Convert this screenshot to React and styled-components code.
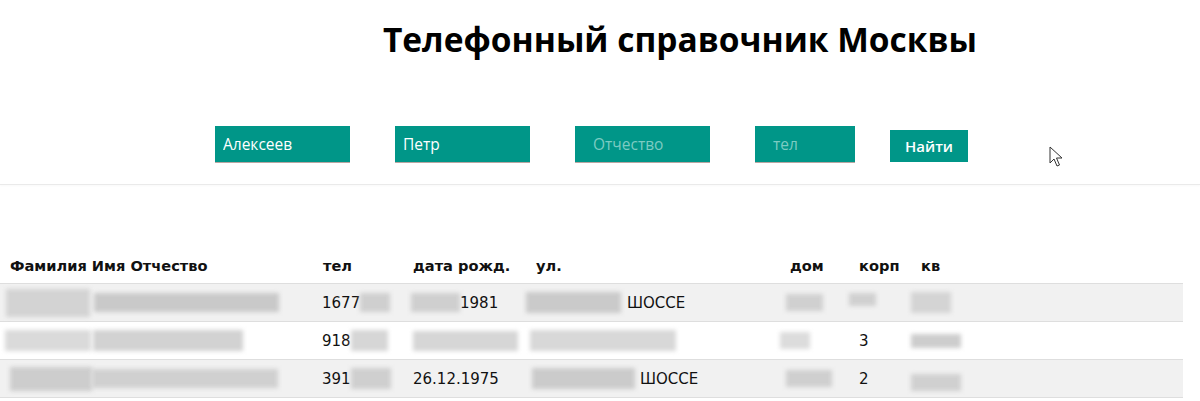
import styled, { createGlobalStyle } from 'styled-components';

const GlobalStyle = createGlobalStyle`
  html, body {
    margin: 0;
    padding: 0;
    background: #fff;
  }
  body {
    font-family: "DejaVu Sans", Verdana, sans-serif;
    color: #111;
  }
`;

const Page = styled.div`
  position: relative;
  width: 1200px;
  height: 401px;
  overflow: hidden;
`;

const Title = styled.h1`
  margin: 0;
  padding: 14px 0 0 160px;
  height: 50px;
  text-align: center;
  font-family: "Open Sans", "Noto Sans", sans-serif;
  font-size: 33.5px;
  font-weight: 700;
  line-height: 50px;
  color: #000;
`;

const SearchForm = styled.form`
  display: flex;
  align-items: center;
  padding: 62px 0 0 215px;
  height: 37px;
`;

const Field = styled.input`
  box-sizing: border-box;
  width: ${(p) => p.$width}px;
  height: 37px;
  margin-right: ${(p) => p.$gap}px;
  padding: 0 0 0 ${(p) => p.$indent}px;
  border: none;
  border-bottom: 1px solid #b9a5a2;
  background: #009688;
  color: #fff;
  font-family: "Open Sans", "Noto Sans", sans-serif;
  font-size: 15.5px;
  outline: none;
  &::placeholder {
    color: #7ccbc2;
  }
`;

const SubmitButton = styled.button`
  box-sizing: border-box;
  width: 78px;
  height: 32px;
  margin-top: 3px;
  border: none;
  background: #009688;
  color: #fff;
  font-family: "Open Sans", "Noto Sans", sans-serif;
  font-size: 15px;
  font-weight: 600;
  cursor: pointer;
`;

const Divider = styled.div`
  margin-top: 21px;
  height: 1px;
  background: #eaeaea;
  box-shadow: 0 1px 2px rgba(0, 0, 0, 0.04);
`;

const Table = styled.div`
  width: 1183px;
  margin-top: 62px;
`;

const Row = styled.div`
  display: grid;
  grid-template-columns: 313px 90px 123px 254px 69px 62px 1fr;
  height: ${(p) => (p.$head ? 37 : 38)}px;
  background: ${(p) => (p.$shaded ? '#f1f1f1' : '#fff')};
  border-bottom: 1px solid #dedede;
  box-sizing: border-box;
`;

const HeadCell = styled.div`
  display: flex;
  align-items: center;
  padding-left: 10px;
  font-size: 14.6px;
  font-weight: 700;
  color: #111;
`;

const Cell = styled.div`
  display: flex;
  align-items: center;
  padding-left: ${(p) => p.$pad ?? 9}px;
  font-size: 15px;
  color: #111;
  white-space: nowrap;
`;

const Blur = styled.span`
  display: inline-block;
  flex: none;
  width: ${(p) => p.$w}px;
  height: ${(p) => p.$h}px;
  margin-left: ${(p) => p.$ml ?? 0}px;
  margin-right: ${(p) => p.$mr ?? 0}px;
  margin-top: ${(p) => p.$mt ?? 0}px;
  background: ${(p) => p.$tone ?? '#cfcfcf'};
  filter: blur(2px);
`;

const Pointer = styled.svg`
  position: absolute;
  left: 1049px;
  top: 146px;
`;

const headers = ['Фамилия Имя Отчество', 'тел', 'дата рожд.', 'ул.', 'дом', 'корп', 'кв'];

export default function App() {
  return (
    <Page>
      <GlobalStyle />
      <Title>Телефонный справочник Москвы</Title>
      <SearchForm onSubmit={(e) => e.preventDefault()}>
        <Field $width={135} $gap={45} $indent={8} defaultValue="Алексеев" />
        <Field $width={135} $gap={45} $indent={8} defaultValue="Петр" />
        <Field $width={135} $gap={45} $indent={18} placeholder="Отчество" />
        <Field $width={100} $gap={35} $indent={18} placeholder="тел" />
        <SubmitButton type="submit">Найти</SubmitButton>
      </SearchForm>
      <Divider />

      <Table>
        <Row $head>
          {headers.map((h) => (
            <HeadCell key={h}>{h}</HeadCell>
          ))}
        </Row>

        <Row $shaded>
          <Cell $pad={6}>
            <Blur $w={84} $h={28} $tone="#d3d3d3" />
            <Blur $w={185} $h={19} $ml={4} $tone="#c9c9c9" />
          </Cell>
          <Cell>
            1677
            <Blur $w={30} $h={19} />
          </Cell>
          <Cell $pad={8}>
            <Blur $w={49} $h={19} />
            1981
          </Cell>
          <Cell $pad={0}>
            <Blur $w={95} $h={21} $mr={6} $tone="#cacaca" />
            ШОССЕ
          </Cell>
          <Cell $pad={6}>
            <Blur $w={37} $h={17} $tone="#d0d0d0" />
          </Cell>
          <Cell $pad={0}>
            <Blur $w={27} $h={13} $mt={-6} $tone="#d0d0d0" />
          </Cell>
          <Cell $pad={0}>
            <Blur $w={40} $h={21} $tone="#d4d4d4" />
          </Cell>
        </Row>

        <Row>
          <Cell $pad={5}>
            <Blur $w={86} $h={21} $tone="#dadada" />
            <Blur $w={150} $h={21} $ml={2} $tone="#d2d2d2" />
          </Cell>
          <Cell>
            918
            <Blur $w={37} $h={21} $tone="#d6d6d6" />
          </Cell>
          <Cell $pad={10}>
            <Blur $w={105} $h={20} $tone="#d6d6d6" />
          </Cell>
          <Cell $pad={4}>
            <Blur $w={146} $h={21} $tone="#d8d8d8" />
          </Cell>
          <Cell $pad={0}>
            <Blur $w={30} $h={17} $tone="#dcdcdc" />
          </Cell>
          <Cell $pad={10}>3</Cell>
          <Cell $pad={0}>
            <Blur $w={50} $h={14} $tone="#cdcdcd" />
          </Cell>
        </Row>

        <Row $shaded>
          <Cell $pad={10}>
            <Blur $w={82} $h={24} $tone="#cdcdcd" />
            <Blur $w={186} $h={19} $tone="#d0d0d0" />
          </Cell>
          <Cell>
            391
            <Blur $w={40} $h={21} />
          </Cell>
          <Cell $pad={10}>26.12.1975</Cell>
          <Cell $pad={6}>
            <Blur $w={103} $h={21} $mr={5} $tone="#cbcbcb" />
            ШОССЕ
          </Cell>
          <Cell $pad={6}>
            <Blur $w={46} $h={17} $tone="#cfcfcf" />
          </Cell>
          <Cell $pad={10}>2</Cell>
          <Cell $pad={0}>
            <Blur $w={50} $h={17} $mt={8} $tone="#d0d0d0" />
          </Cell>
        </Row>
      </Table>

      <Pointer width="14" height="22" viewBox="0 0 14 22">
        <path
          d="M1 1 L1 17 L5 13 L8 20 L10.5 19 L7.5 12 L13 12 Z"
          fill="#fff"
          stroke="#333"
          strokeWidth="1"
          strokeLinejoin="round"
        />
      </Pointer>
    </Page>
  );
}
